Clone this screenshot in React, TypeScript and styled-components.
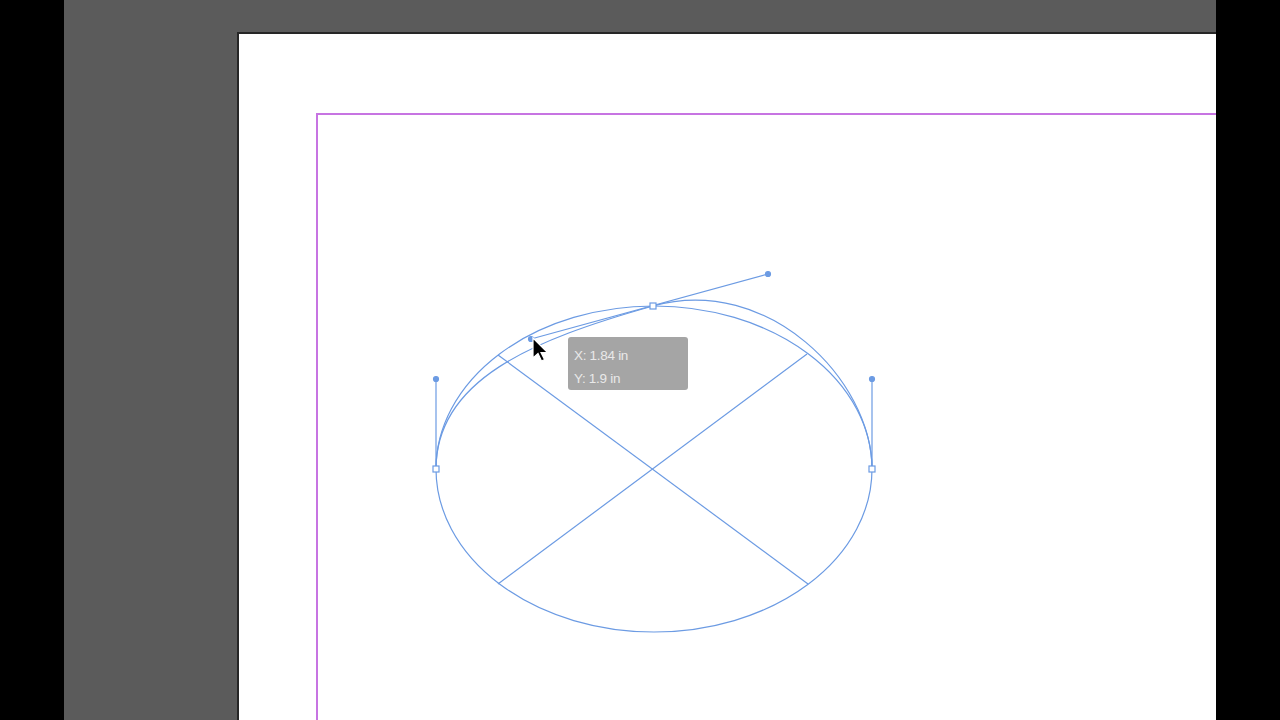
import React from 'react';
import styled, { createGlobalStyle } from 'styled-components';

const GlobalStyle = createGlobalStyle`
    html, body {
        margin: 0;
        padding: 0;
        background: #000;
        overflow: hidden;
    }
    body {
        font-family: 'Liberation Sans', Arial, sans-serif;
    }
`;

const Screen = styled.div`
    display: flex;
    width: 1280px;
    height: 720px;
    background: #000;
`;

const SideBar = styled.div<{ $w: number }>`
    width: ${(p) => p.$w}px;
    flex-shrink: 0;
    background: #000;
`;

const Pasteboard = styled.div`
    flex: 1;
    display: flex;
    background: #5b5b5b;
    padding: 32px 0 0 173px;
    overflow: hidden;
`;

const Page = styled.div`
    position: relative;
    flex: 1;
    display: flex;
    background: #fff;
    border-top: 2px solid #262626;
    border-left: 2px solid #262626;
    padding: 79px 0 0 77px;
`;

const MarginGuide = styled.div`
    flex: 1;
    border-top: 2px solid #c774e2;
    border-left: 2px solid #c774e2;
`;

const Artwork = styled.svg`
    position: absolute;
    left: 0;
    top: 0;
    width: 100%;
    height: 100%;
    overflow: visible;
    pointer-events: none;
`;

const Tooltip = styled.div`
    position: absolute;
    left: 329px;
    top: 303px;
    width: 120px;
    height: 53px;
    box-sizing: border-box;
    padding: 7px 0 0 6px;
    background: #a5a5a5;
    border-radius: 3px;
    color: #e9e9e9;
    font-size: 13.5px;
    line-height: 23px;
    letter-spacing: -0.3px;
`;

const Cursor = styled.svg`
    position: absolute;
    left: 293px;
    top: 303px;
    width: 20px;
    height: 28px;
    overflow: visible;
`;

const BLUE = '#6c9be3';

// drawing is in screen coordinates, shifted back by the page's origin
const Drawing: React.FC = () => (
    <Artwork>
        <g transform='translate(-239,-34)' fill='none' stroke={BLUE} strokeWidth={1.2}>
            <ellipse cx={654} cy={469} rx={218} ry={163} />
            <line x1={498} y1={355} x2={808} y2={584} />
            <line x1={807} y1={354} x2={498} y2={584} />
            <path d='M436,469 C436,380 532,340 653,306 C768,274 872,380 872,469' />
            <line x1={436} y1={379} x2={436} y2={469} />
            <line x1={872} y1={379} x2={872} y2={469} />
            <line x1={531} y1={339} x2={768} y2={274} />
            <circle cx={436} cy={379} r={2.5} fill={BLUE} />
            <circle cx={872} cy={379} r={2.5} fill={BLUE} />
            <circle cx={768} cy={274} r={2.5} fill={BLUE} />
            <circle cx={531} cy={339} r={2.5} fill={BLUE} />
            <rect x={433} y={466} width={6} height={6} fill='#fff' />
            <rect x={869} y={466} width={6} height={6} fill='#fff' />
            <rect x={650} y={303} width={6} height={6} fill='#fff' />
        </g>
    </Artwork>
);

const App: React.FC = () => {
    return (
        <>
            <GlobalStyle />
            <Screen>
                <SideBar $w={64} />
                <Pasteboard>
                    <Page>
                        <MarginGuide />
                        <Drawing />
                        <Tooltip>
                            <div>X: 1.84 in</div>
                            <div>Y: 1.9 in</div>
                        </Tooltip>
                        <Cursor viewBox='0 0 20 28'>
                            <path
                                d='M1,1 L1,21 L6,16.5 L9.5,24 L12.5,22.5 L9,15.5 L15.5,15.5 Z'
                                fill='#000'
                                stroke='#fff'
                                strokeWidth={1.2}
                            />
                        </Cursor>
                    </Page>
                </Pasteboard>
                <SideBar $w={64} />
            </Screen>
        </>
    );
};

export default App;
